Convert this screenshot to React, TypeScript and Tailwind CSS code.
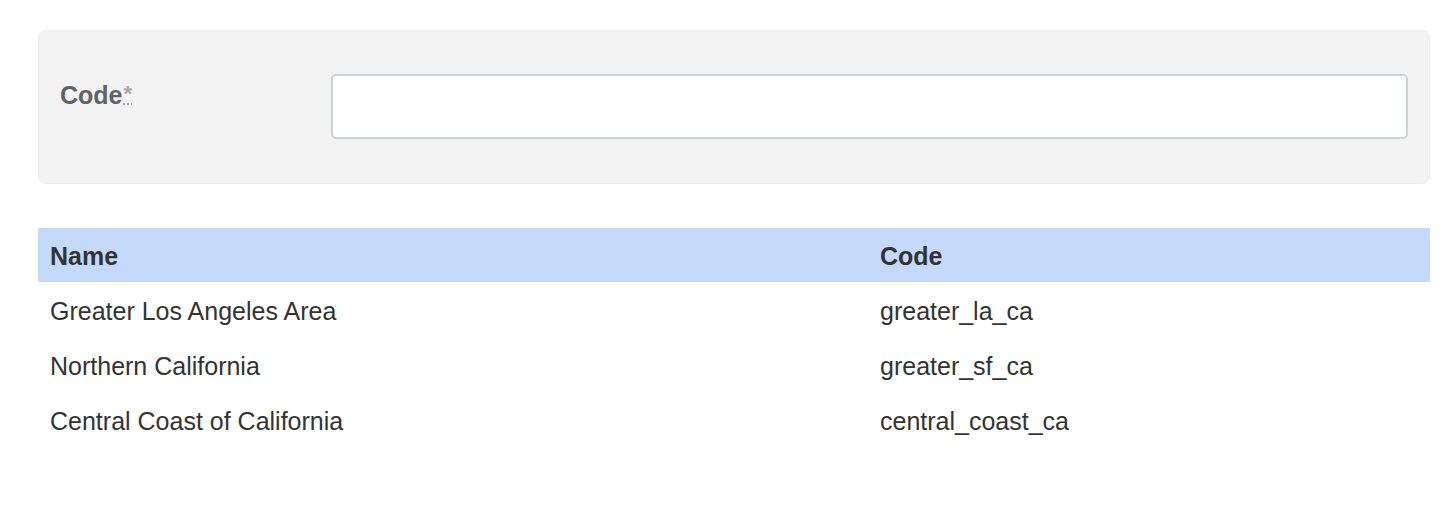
const rows = [
  { name: "Greater Los Angeles Area", code: "greater_la_ca" },
  { name: "Northern California", code: "greater_sf_ca" },
  { name: "Central Coast of California", code: "central_coast_ca" },
];

export default function App() {
  return (
    <div
      className="min-h-[512px] bg-white pt-[30px] pl-[38px] text-[25px] text-[#333333]"
      style={{ fontFamily: '"Liberation Sans", Arial, sans-serif' }}
    >
      {/* Form panel */}
      <div className="w-[1392px] rounded-[8px] border border-[#ececec] bg-[#f3f3f3] px-[21px] pt-[43px] pb-[44px]">
        <div className="flex items-start">
          <label className="w-[271px] pt-[2px] font-bold leading-[35px] text-[#5f6367]">
            Code
            <abbr
              title="required"
              className="ml-[1px] text-[#a9a9a9]"
              style={{ textDecoration: "underline dotted", fontSize: "22px", verticalAlign: "3px" }}
            >
              *
            </abbr>
          </label>
          <input
            type="text"
            className="h-[65px] flex-1 rounded-[5px] border-2 border-[#cdd2d6] bg-white px-3 outline-none"
          />
        </div>
      </div>

      {/* Results table */}
      <table className="mt-[44px] w-[1392px] border-collapse text-left">
        <thead>
          <tr className="h-[54px] bg-[#c5d9fb]">
            <th className="w-[830px] px-[12px] pt-[4px] font-bold">Name</th>
            <th className="px-[12px] pt-[4px] font-bold">Code</th>
          </tr>
        </thead>
        <tbody>
          {rows.map((row) => (
            <tr key={row.code} className="h-[55px]">
              <td className="px-[12px] pt-[4px]">{row.name}</td>
              <td className="px-[12px] pt-[4px]">{row.code}</td>
            </tr>
          ))}
        </tbody>
      </table>
    </div>
  );
}
